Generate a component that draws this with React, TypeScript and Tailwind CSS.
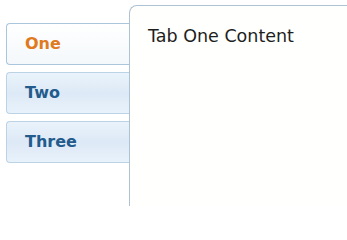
import { useState } from "react";

type Tab = {
  id: string;
  label: string;
  content: string;
};

const tabs: Tab[] = [
  { id: "one", label: "One", content: "Tab One Content" },
  { id: "two", label: "Two", content: "Tab Two Content" },
  { id: "three", label: "Three", content: "Tab Three Content" },
];

export default function App() {
  const [active, setActive] = useState("one");
  const current = tabs.find((t) => t.id === active) ?? tabs[0];

  return (
    <div className="flex h-[206px] overflow-hidden bg-white pt-[5px] pl-[6px] font-['DejaVu_Sans',sans-serif]">
      <div className="relative z-0 mt-[18px] flex w-[124px] shrink-0 flex-col gap-[7px]">
        {tabs.map((tab) => {
          const isActive = tab.id === active;
          return (
            <button
              key={tab.id}
              onClick={() => setActive(tab.id)}
              className={
                isActive
                  ? "flex h-[42px] items-center rounded-l-[4px] border border-r-0 border-[#a9c6dc] bg-gradient-to-b from-white to-[#f4f8fb] pl-[18px] text-left text-[16px] font-bold text-[#e07a1e]"
                  : "flex h-[42px] items-center rounded-l-[4px] border border-r-0 border-[#bcd3e5] bg-gradient-to-b from-[#eaf3fb] via-[#dde9f6] to-[#e8f2fb] pl-[18px] text-left text-[16px] font-bold text-[#235b8c]"
              }
            >
              {tab.label}
            </button>
          );
        })}
      </div>
      <div className="relative z-10 -ml-px h-[201px] flex-1 rounded-tl-[8px] border-l border-t border-[#adc3d3] bg-[#fffffd] pl-[18px] pt-[17px]">
        <p className="text-[17.5px] text-[#1e1e1e]">{current.content}</p>
      </div>
    </div>
  );
}
